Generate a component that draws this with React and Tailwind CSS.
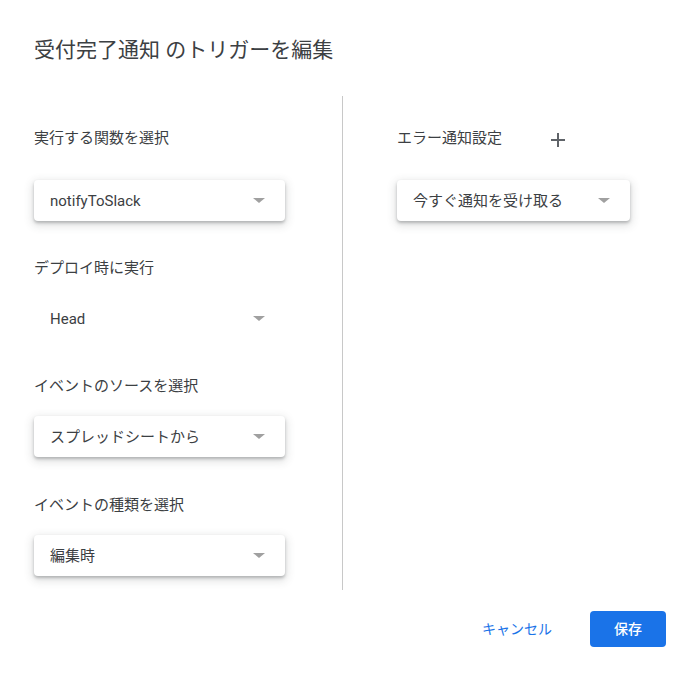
import React from "react";

const FONT = { fontFamily: 'Roboto, "Noto Sans CJK JP", "Noto Sans", sans-serif' };

function Arrow() {
  return (
    <span className="block w-0 h-0 border-x-[6px] border-x-transparent border-t-[5px] border-t-[#a0a0a0]" />
  );
}

function Select({ value, width = "w-[251px]", flat = false }) {
  return (
    <div
      className={`${width} h-[41px] flex items-center justify-between pl-4 pr-5 rounded-[4px] bg-white ${
        flat ? "" : "shadow-[0_2px_3px_0_rgba(60,64,67,0.3),0_3px_8px_2px_rgba(60,64,67,0.15)]"
      }`}
    >
      <span className="text-[15px] leading-5 text-[#3c4043]">{value}</span>
      <Arrow />
    </div>
  );
}

function Label({ children }) {
  return <div className="text-[15px] leading-5 h-5 text-[#3c4043] whitespace-nowrap">{children}</div>;
}

export default function App() {
  return (
    <div className="w-[697px] h-[676px] bg-white relative overflow-hidden" style={FONT}>
      <div className="pl-[34px] pt-[36px]">
        <h1 className="text-[21px] leading-7 h-7 text-[#3c4043] font-normal whitespace-nowrap">
          受付完了通知 のトリガーを編集
        </h1>
      </div>
      <div className="flex mt-[32px] pl-[34px]">
        <div className="w-[308px] pt-[32px]">
          <Label>実行する関数を選択</Label>
          <div className="mt-[32px]">
            <Select value="notifyToSlack" />
          </div>
          <div className="mt-[37px]">
            <Label>デプロイ時に実行</Label>
          </div>
          <div className="mt-[20px]">
            <Select value="Head" flat />
          </div>
          <div className="mt-[37px]">
            <Label>イベントのソースを選択</Label>
          </div>
          <div className="mt-[20px]">
            <Select value="スプレッドシートから" />
          </div>
          <div className="mt-[38px]">
            <Label>イベントの種類を選択</Label>
          </div>
          <div className="mt-[20px]">
            <Select value="編集時" />
          </div>
        </div>
        <div className="w-px h-[494px] bg-[#c8c8c8]" />
        <div className="pl-[54px] pt-[32px]">
          <div className="flex items-center h-5">
            <Label>エラー通知設定</Label>
            <svg
              className="ml-[49px] mt-[4px]"
              width="14"
              height="14"
              viewBox="0 0 14 14"
              fill="none"
              stroke="#5f6368"
              strokeWidth="2"
            >
              <path d="M7 0v14M0 7h14" />
            </svg>
          </div>
          <div className="mt-[32px]">
            <Select value="今すぐ通知を受け取る" width="w-[233px]" />
          </div>
        </div>
      </div>
      <div className="flex justify-end items-center pr-[31px] mt-[21px]">
        <button className="h-9 px-4 text-[14px] text-[#1a73e8] mr-[22px]">キャンセル</button>
        <button className="w-[76px] h-9 rounded-[4px] bg-[#1a73e8] text-white text-[14px] font-medium">
          保存
        </button>
      </div>
    </div>
  );
}
